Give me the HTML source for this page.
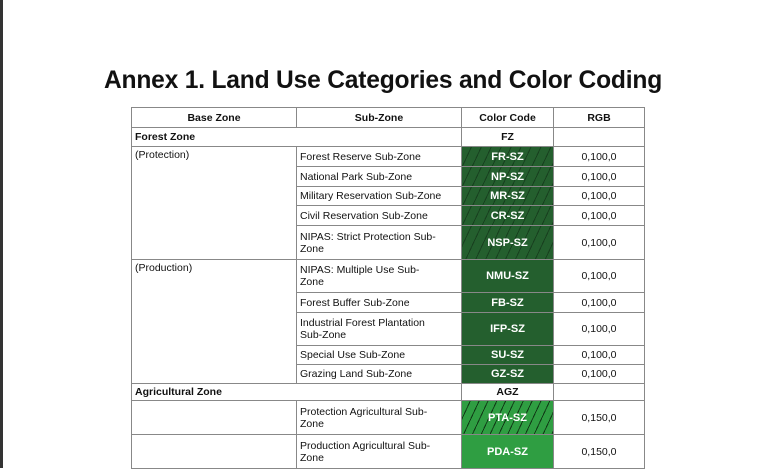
<!DOCTYPE html>
<html><head><style>
*{margin:0;padding:0;box-sizing:border-box}
body{width:774px;height:468px;background:#fff;position:relative;overflow:hidden;font-family:"Liberation Sans",Arial,sans-serif;color:#111}
.edge{position:absolute;left:0;top:0;width:3px;height:468px;background:#333}
h1{position:absolute;left:0;width:766px;top:67px;text-align:center;font-size:24.6px;font-weight:bold;letter-spacing:-0.2px}
.c{position:absolute;border:1px solid #888;font-size:10.5px;padding:2px 3px;line-height:12px}
.b{font-weight:bold}
.ctr{text-align:center;display:flex;align-items:center;justify-content:center}
.g{background:#245f2e;color:#fff;font-weight:bold;font-size:11px}
.h{background:repeating-linear-gradient(115deg,#245f2e 0 8px,#183f1f 8px 9px)}
.lg{background:#2f9e42;color:#fff;font-weight:bold;font-size:11px}
.lh{background:repeating-linear-gradient(115deg,#2f9e42 0 7px,#103a16 7px 8px)}
.vc{display:flex;align-items:center}
</style></head><body>
<div class="edge"></div>
<h1>Annex 1. Land Use Categories and Color Coding</h1>

<div class="c b ctr" style="left:131px;top:107px;width:166px;height:21px">Base Zone</div>
<div class="c b ctr" style="left:296px;top:107px;width:166px;height:21px">Sub-Zone</div>
<div class="c b ctr" style="left:461px;top:107px;width:93px;height:21px">Color Code</div>
<div class="c b ctr" style="left:553px;top:107px;width:92px;height:21px">RGB</div>

<div class="c b vc" style="left:131px;top:127px;width:331px;height:20px">Forest Zone</div>
<div class="c b ctr" style="left:461px;top:127px;width:93px;height:20px">FZ</div>
<div class="c" style="left:553px;top:127px;width:92px;height:20px"></div>

<div class="c" style="left:131px;top:146px;width:166px;height:114px">(Protection)</div>
<div class="c" style="left:131px;top:259px;width:166px;height:125px">(Production)</div>
<div class="c b vc" style="left:131px;top:383px;width:331px;height:18px">Agricultural Zone</div>
<div class="c b ctr" style="left:461px;top:383px;width:93px;height:18px">AGZ</div>
<div class="c" style="left:553px;top:383px;width:92px;height:18px"></div>
<div class="c" style="left:131px;top:400px;width:166px;height:35px"></div>
<div class="c" style="left:131px;top:434px;width:166px;height:35px"></div>

<div class="c vc" style="left:296px;top:146px;width:166px;height:21px">Forest Reserve Sub-Zone</div>
<div class="c g h ctr" style="left:461px;top:146px;width:93px;height:21px">FR-SZ</div>
<div class="c ctr" style="left:553px;top:146px;width:92px;height:21px">0,100,0</div>

<div class="c vc" style="left:296px;top:166px;width:166px;height:21px">National Park Sub-Zone</div>
<div class="c g h ctr" style="left:461px;top:166px;width:93px;height:21px">NP-SZ</div>
<div class="c ctr" style="left:553px;top:166px;width:92px;height:21px">0,100,0</div>

<div class="c vc" style="left:296px;top:186px;width:166px;height:20px">Military Reservation Sub-Zone</div>
<div class="c g h ctr" style="left:461px;top:186px;width:93px;height:20px">MR-SZ</div>
<div class="c ctr" style="left:553px;top:186px;width:92px;height:20px">0,100,0</div>

<div class="c vc" style="left:296px;top:205px;width:166px;height:21px">Civil Reservation Sub-Zone</div>
<div class="c g h ctr" style="left:461px;top:205px;width:93px;height:21px">CR-SZ</div>
<div class="c ctr" style="left:553px;top:205px;width:92px;height:21px">0,100,0</div>

<div class="c vc" style="left:296px;top:225px;width:166px;height:35px">NIPAS: Strict Protection Sub-<br>Zone</div>
<div class="c g h ctr" style="left:461px;top:225px;width:93px;height:35px">NSP-SZ</div>
<div class="c ctr" style="left:553px;top:225px;width:92px;height:35px">0,100,0</div>

<div class="c vc" style="left:296px;top:259px;width:166px;height:34px">NIPAS: Multiple Use Sub-<br>Zone</div>
<div class="c g ctr" style="left:461px;top:259px;width:93px;height:34px">NMU-SZ</div>
<div class="c ctr" style="left:553px;top:259px;width:92px;height:34px">0,100,0</div>

<div class="c vc" style="left:296px;top:292px;width:166px;height:21px">Forest Buffer Sub-Zone</div>
<div class="c g ctr" style="left:461px;top:292px;width:93px;height:21px">FB-SZ</div>
<div class="c ctr" style="left:553px;top:292px;width:92px;height:21px">0,100,0</div>

<div class="c vc" style="left:296px;top:312px;width:166px;height:34px">Industrial Forest Plantation<br>Sub-Zone</div>
<div class="c g ctr" style="left:461px;top:312px;width:93px;height:34px">IFP-SZ</div>
<div class="c ctr" style="left:553px;top:312px;width:92px;height:34px">0,100,0</div>

<div class="c vc" style="left:296px;top:345px;width:166px;height:20px">Special Use Sub-Zone</div>
<div class="c g ctr" style="left:461px;top:345px;width:93px;height:20px">SU-SZ</div>
<div class="c ctr" style="left:553px;top:345px;width:92px;height:20px">0,100,0</div>

<div class="c vc" style="left:296px;top:364px;width:166px;height:20px">Grazing Land Sub-Zone</div>
<div class="c g ctr" style="left:461px;top:364px;width:93px;height:20px">GZ-SZ</div>
<div class="c ctr" style="left:553px;top:364px;width:92px;height:20px">0,100,0</div>

<div class="c vc" style="left:296px;top:400px;width:166px;height:35px">Protection Agricultural Sub-<br>Zone</div>
<div class="c lg lh ctr" style="left:461px;top:400px;width:93px;height:35px">PTA-SZ</div>
<div class="c ctr" style="left:553px;top:400px;width:92px;height:35px">0,150,0</div>

<div class="c vc" style="left:296px;top:434px;width:166px;height:35px">Production Agricultural Sub-<br>Zone</div>
<div class="c lg ctr" style="left:461px;top:434px;width:93px;height:35px">PDA-SZ</div>
<div class="c ctr" style="left:553px;top:434px;width:92px;height:35px">0,150,0</div>
</body></html>
